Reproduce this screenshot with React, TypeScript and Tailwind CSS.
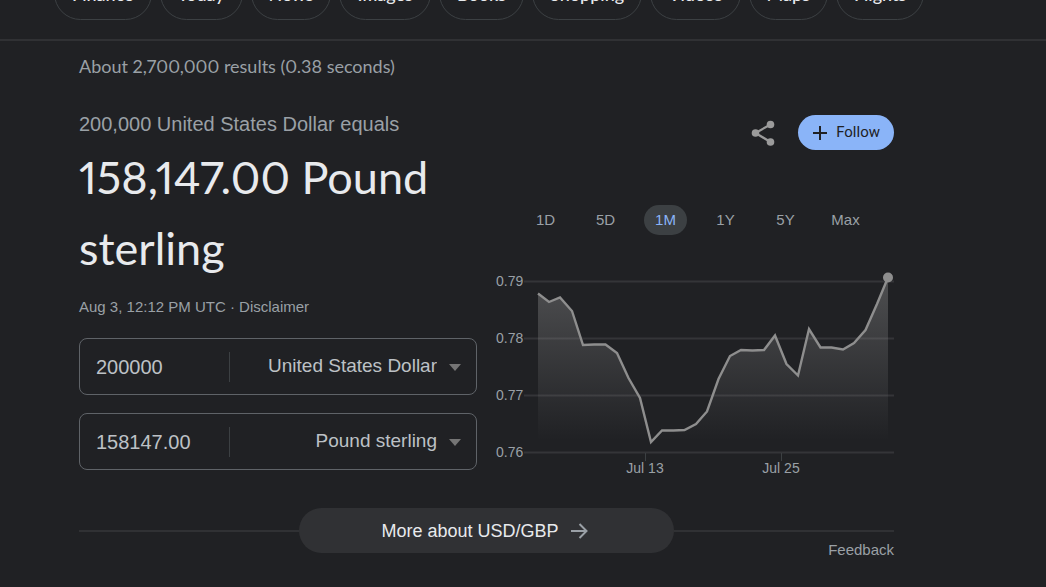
import { useState } from "react";

const filters = ["Finance", "Today", "News", "Images", "Books", "Shopping", "Videos", "Maps", "Flights"];
const ranges = ["1D", "5D", "1M", "1Y", "5Y", "Max"];
const currencies = ["United States Dollar", "Pound sterling"];

const points = [
  [42, 25.5], [53, 34], [64, 29.5], [76, 43], [87, 77], [98, 76.5], [109.5, 76.5], [121, 85],
  [132.5, 110], [144, 130], [155, 174], [166, 162.5], [177.5, 162.5], [188.5, 162], [200, 156], [211, 143.5],
  [222.5, 111], [234, 88], [245, 82], [256.5, 82.5], [268, 82], [279, 67.5], [290.5, 96], [302, 107.5],
  [313, 61], [324.5, 79.5], [335.5, 79.5], [347, 81.5], [358, 75], [369.5, 62], [381, 36], [392, 9.5],
];

const gridLines = [
  { y: 13.5, label: "0.79" },
  { y: 70.5, label: "0.78" },
  { y: 127.5, label: "0.77" },
  { y: 184.5, label: "0.76" },
];

const dates = [
  { x: 149, label: "Jul 13" },
  { x: 285, label: "Jul 25" },
];

function RateChart() {
  const line = points.map((p) => p.join(",")).join(" ");

  return (
    <svg viewBox="0 0 398 212" className="block w-full h-auto" role="img" aria-label="USD to GBP, 1 month">
      <defs>
        <linearGradient id="fade" x1="0" y1="10" x2="0" y2="172" gradientUnits="userSpaceOnUse">
          <stop offset="0" stopColor="#9a9a9a" stopOpacity="0.38" />
          <stop offset="1" stopColor="#9a9a9a" stopOpacity="0" />
        </linearGradient>
      </defs>
      {gridLines.map(({ y, label }) => (
        <g key={label}>
          <line x1="28" x2="398" y1={y} y2={y} stroke="#343538" strokeWidth="2" />
          <text x="0" y={y + 4} fontSize="14" fill="#9aa0a6">{label}</text>
        </g>
      ))}
      {dates.map(({ x, label }) => (
        <g key={label}>
          <line x1={x + 0.5} x2={x + 0.5} y1="185" y2="193" stroke="#3c4043" />
          <text x={x} y="205" fontSize="14" textAnchor="middle" fill="#9aa0a6">{label}</text>
        </g>
      ))}
      <polygon points={`42,185 ${line} 392,185`} fill="url(#fade)" />
      <polyline points={line} fill="none" stroke="#8e8e8e" strokeWidth="2.4" />
      <circle cx="392" cy="9.5" r="5" fill="#8e8e8e" />
    </svg>
  );
}

interface CurrencyFieldProps {
  name: string;
  amount: string;
  currency: string;
}

function CurrencyField({ name, amount, currency }: CurrencyFieldProps) {
  return (
    <div className="relative flex items-center h-[57px] rounded-lg border border-[#5f6368] text-[#bdc1c6]">
      <input
        type="text"
        aria-label={`${name} amount`}
        defaultValue={amount}
        className="w-[149px] pl-4 bg-transparent text-xl outline-none"
      />
      <div className="w-px h-[30px] bg-[#3c4043]" />
      <select
        aria-label={`${name} currency`}
        defaultValue={currency}
        className="flex-1 h-full pr-[39px] appearance-none bg-transparent text-[19px] text-right outline-none [text-align-last:right]"
      >
        {currencies.map((c) => (
          <option key={c}>{c}</option>
        ))}
      </select>
      <svg viewBox="0 0 12 7" className="absolute right-[15px] top-[25px] w-3 h-[7px] pointer-events-none">
        <path d="M0 0h12L6 7z" fill="#757575" />
      </svg>
    </div>
  );
}

export default function App() {
  const [range, setRange] = useState("1M");

  return (
    <div className="min-h-screen overflow-hidden bg-[#202124] font-['Liberation_Sans',Arial,sans-serif] text-[#9aa0a6]">
      {/* Filter chips, scrolled partly out of view */}
      <nav className="-mt-[33px] flex gap-2 pl-[54px] pb-[19px] border-b-2 border-[#303134] font-['Lato',sans-serif]">
        {filters.map((f) => (
          <a
            key={f}
            href="#"
            className="h-[53px] px-[17px] flex items-center rounded-full border border-[#3c4043] text-lg leading-6 font-medium text-[#e8eaed]"
          >
            {f}
          </a>
        ))}
      </nav>

      <main className="max-w-[894px] pl-[79px] pt-[13px]">
        <p className="text-lg leading-6 font-['Lato',sans-serif] proportional-nums">About 2,700,000 results (0.38 seconds)</p>

        <div className="mt-[34px] grid grid-cols-2 gap-[19px]">
          {/* Converter */}
          <section>
            <p className="text-xl leading-6">200,000 United States Dollar equals</p>
            <h1 className="mt-[6px] text-[45px] leading-[71px] text-[#e8eaed] font-['Lato',sans-serif] proportional-nums">
              158,147.00 Pound sterling
            </h1>
            <p className="mt-[13px] text-[15px] leading-5">
              Aug 3, 12:12 PM UTC · <a href="#">Disclaimer</a>
            </p>
            <div className="mt-[21px] flex flex-col gap-[18px]">
              <CurrencyField name="From" amount="200000" currency="United States Dollar" />
              <CurrencyField name="To" amount="158147.00" currency="Pound sterling" />
            </div>
          </section>

          {/* Chart */}
          <section className="pt-[3px]">
            <div className="flex items-center justify-end gap-[23px]">
              <button aria-label="Share">
                <svg viewBox="0 0 24 26" className="w-6 h-[26px]" fill="#9b9b9b">
                  <path d="M19.5 4.5L4.5 13l15 9" fill="none" stroke="#9b9b9b" strokeWidth="2.2" />
                  <circle cx="19.5" cy="4.5" r="3.8" />
                  <circle cx="4.5" cy="13" r="3.8" />
                  <circle cx="19.5" cy="22" r="3.8" />
                </svg>
              </button>
              <button className="flex items-center h-[35px] gap-[9px] pl-[15px] pr-[14px] rounded-full bg-[#8ab4f8] text-[#202124] text-[15px] font-['Roboto',sans-serif]">
                <svg viewBox="0 0 14 14" className="w-[14px] h-[14px]">
                  <path d="M7 0v14M0 7h14" stroke="#202124" strokeWidth="2" />
                </svg>
                Follow
              </button>
            </div>

            <div className="mt-[55px] pl-7 flex gap-[17px]">
              {ranges.map((r) => (
                <button
                  key={r}
                  onClick={() => setRange(r)}
                  className={`h-[30px] min-w-[43px] rounded-full text-[15px] ${
                    r === range ? "bg-[#3c4043] text-[#8ab4f8]" : ""
                  }`}
                >
                  {r}
                </button>
              ))}
            </div>

            <div className="mt-[33px]">
              <RateChart />
            </div>
          </section>
        </div>

        <div className="mt-[28px] flex items-center">
          <div className="flex-1 h-[2px] bg-[#303134]" />
          <button className="w-[375px] h-[45px] flex items-center justify-center gap-3 pr-1 rounded-full bg-[#303134] text-lg text-[#e8eaed]">
            More about USD/GBP
            <svg viewBox="0 0 17 16" className="w-[17px] h-4" fill="none" stroke="#9aa0a6" strokeWidth="2">
              <path d="M0 8h15.5M8.5 1l7 7-7 7" />
            </svg>
          </button>
          <div className="flex-1 h-[2px] bg-[#303134]" />
        </div>
        <div className="-mt-[13px] flex justify-end">
          <a href="#" className="text-[15px] leading-5">Feedback</a>
        </div>
      </main>
    </div>
  );
}
